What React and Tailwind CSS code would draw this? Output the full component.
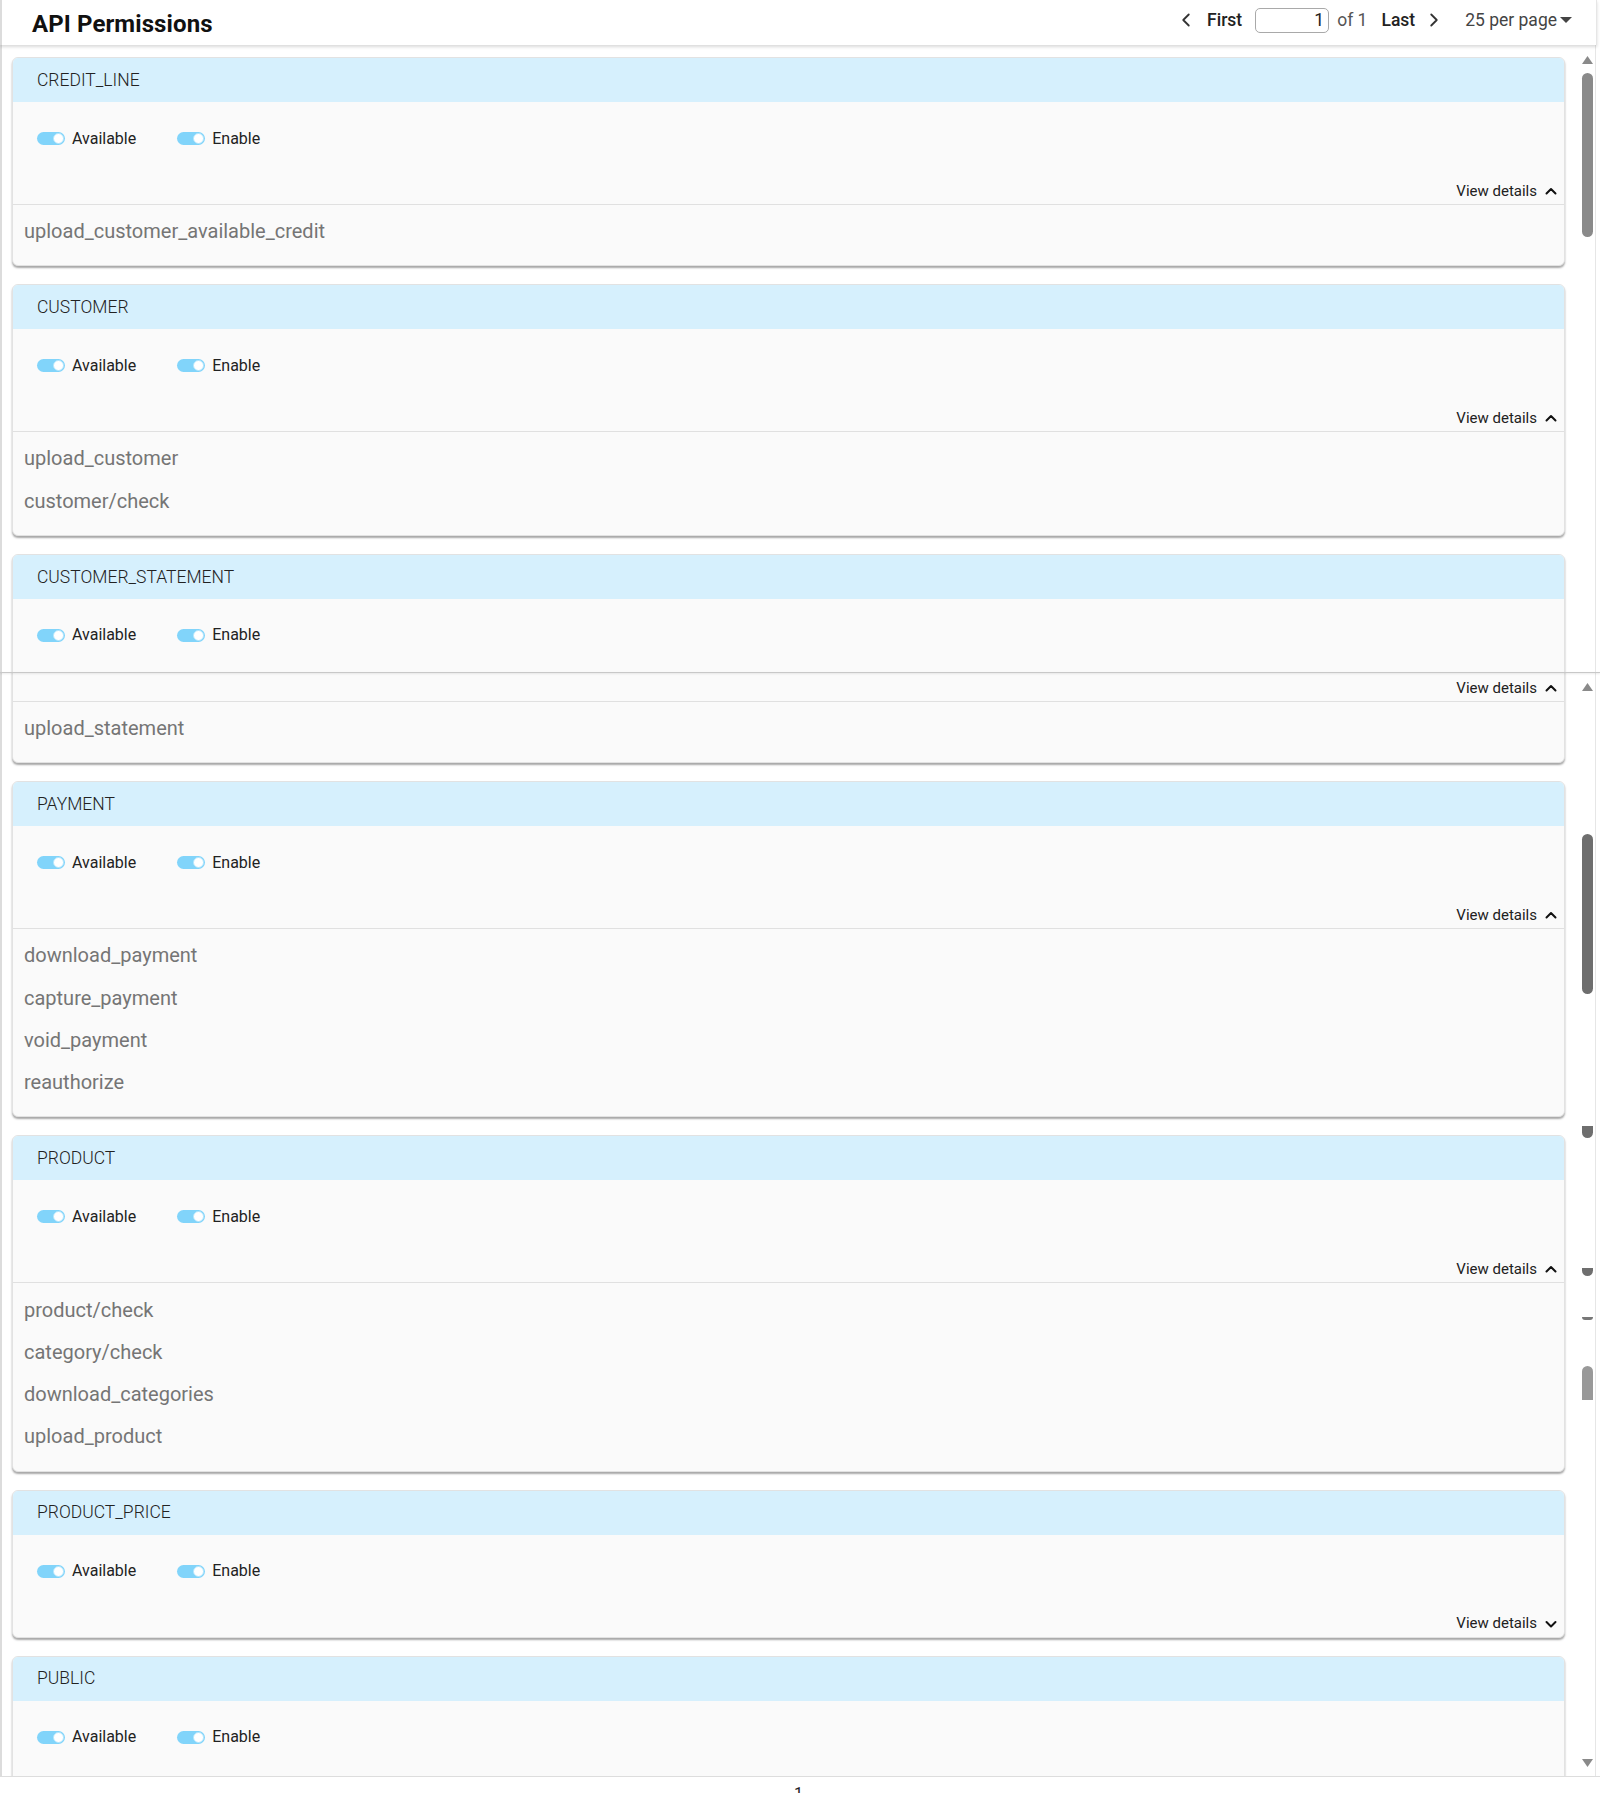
import { ChevronLeft, ChevronRight } from "lucide-react";

const groups = [
    { name: "CREDIT_LINE", open: true, items: ["upload_customer_available_credit"] },
    { name: "CUSTOMER", open: true, items: ["upload_customer", "customer/check"] },
    { name: "CUSTOMER_STATEMENT", open: true, items: ["upload_statement"] },
    { name: "PAYMENT", open: true, items: ["download_payment", "capture_payment", "void_payment", "reauthorize"] },
    { name: "PRODUCT", open: true, items: ["product/check", "category/check", "download_categories", "upload_product"] },
    { name: "PRODUCT_PRICE", open: false, items: [] },
    { name: "PUBLIC", open: false, items: [] },
];

const Toggle = ({ label }) => (
    <div className="flex items-center gap-[7px]">
        <div className="w-[28px] h-[13px] rounded-full bg-[#81d4fa] flex items-center justify-end p-[1px]">
            <div className="w-[11px] h-[11px] rounded-full bg-white border border-[#b3e5fc]" />
        </div>
        <span className="text-[16px] leading-none text-[#222]">{label}</span>
    </div>
);

const Chevron = ({ up }) => (
    <svg width="14" height="14" viewBox="0 0 14 14" fill="none" stroke="#111" strokeWidth="2" strokeLinecap="round" strokeLinejoin="round">
        {up ? <path d="M2.5 9.5 L7 5 L11.5 9.5" /> : <path d="M2.5 5 L7 9.5 L11.5 5" />}
    </svg>
);

const GroupCard = ({ group }) => (
    <div className="shrink-0 rounded-[6px] bg-[#fafafa] border border-[#e2e2e2] shadow-[0_2px_2px_rgba(0,0,0,0.35)] overflow-hidden">
        {/* Header band */}
        <div className="h-[44px] bg-[#d6f0fd] flex items-center pl-[24px] text-[17.5px] font-light text-[#222]">
            {group.name}
        </div>

        {/* Toggles */}
        <div className="flex items-center gap-[41px] pl-[24px] pt-[28px] h-[45px]">
            <Toggle label="Available" />
            <Toggle label="Enable" />
        </div>

        {/* View details */}
        <div className="flex items-center justify-end gap-[7px] pr-[6px] h-[20px] mt-[34px] mb-[3px]">
            <span className="text-[15px] text-[#212121]">View details</span>
            <Chevron up={group.open} />
        </div>

        {group.open && (
            <div className="border-t border-[#e0e0e0] pt-[5px] pb-[13px]">
                {group.items.map((item) => (
                    <div key={item} className="h-[42.3px] flex items-center pl-[11px] text-[20px] text-[#757575]">
                        {item}
                    </div>
                ))}
            </div>
        )}
    </div>
);

const Arrow = ({ down }) => (
    <svg width="11" height="10" viewBox="0 0 11 10">
        {down ? <path d="M0 1 H11 L5.5 9 Z" fill="#8a8a8a" /> : <path d="M0 9 H11 L5.5 1 Z" fill="#8a8a8a" />}
    </svg>
);

const App = () => {
    return (
        <div className="w-[1600px] h-[1793px] relative overflow-hidden bg-white flex flex-col font-['Roboto','Liberation_Sans',sans-serif]">
            {/* Header */}
            <div className="h-[45px] shrink-0 flex items-center justify-between pl-[30px] pr-[23px] bg-white border-l-2 border-[#dcdcdc] border-r border-r-[#e6e6e6] mr-[3px] shadow-[0_2px_3px_rgba(0,0,0,0.15)] relative z-10">
                <h1 className="mt-[2px] text-[24px] font-bold text-[#111] tracking-[0.1px]">API Permissions</h1>
                <div className="-mt-[5px] flex items-center text-[17.5px]">
                    <ChevronLeft className="w-[22px] h-[22px] text-[#333]" strokeWidth={2} />
                    <span className="ml-[10px] font-medium text-[#222]">First</span>
                    <div className="ml-[13px] w-[74px] h-[25px] rounded-[5px] border border-[#a9a9a9] flex items-center justify-end pr-[4px] text-[#222]">1</div>
                    <span className="ml-[8px] text-[#555]">of 1</span>
                    <span className="ml-[14px] font-medium text-[#222]">Last</span>
                    <ChevronRight className="ml-[8px] w-[22px] h-[22px] text-[#333]" strokeWidth={2} />
                    <span className="ml-[20px] text-[#444]">25 per page</span>
                    <svg width="14" height="8" viewBox="0 0 14 8" className="ml-[2px]">
                        <path d="M1 1 H13 L7 7 Z" fill="#444" />
                    </svg>
                </div>
            </div>

            {/* Body */}
            <div className="flex-1 flex min-h-0 overflow-hidden">
                <div className="w-[1568px] shrink-0 border-l-2 border-[#dcdcdc] pl-[10px] pr-[3px] pt-[12px] flex flex-col gap-[18px]">
                    {groups.map((g) => (
                        <GroupCard key={g.name} group={g} />
                    ))}
                </div>

                {/* Scrollbar lane */}
                <div className="w-[28px] shrink-0 pl-[14px] flex flex-col border-r border-[#e6e6e6]">
                    <div className="mt-[10px]"><Arrow /></div>
                    <div className="mt-[8px] shrink-0 w-[11px] h-[164px] rounded-full bg-[#8a8a8a]" />
                    <div className="mt-[445px]"><Arrow /></div>
                    <div className="mt-[142px] shrink-0 w-[11px] h-[160px] rounded-full bg-[#6e6e6e]" />
                    <div className="mt-[132px] shrink-0 w-[11px] h-[12px] rounded-b-full bg-[#6e6e6e]" />
                    <div className="mt-[130px] shrink-0 w-[11px] h-[8px] rounded-b-full bg-[#6e6e6e]" />
                    <div className="mt-[41px] shrink-0 w-[11px] h-[3px] rounded-b-full bg-[#777]" />
                    <div className="mt-[46px] shrink-0 w-[11px] h-[34px] rounded-t-full bg-[#999]" />
                    <div className="mt-[358px]"><Arrow down /></div>
                </div>
            </div>

            {/* Footer */}
            <div className="h-[17px] shrink-0 bg-white border-t border-[#dddddd] pl-[794px] pt-[9px] text-[16px] leading-none text-[#222] relative z-10">
                1
            </div>

            {/* capture seam */}
            <div className="absolute left-0 right-0 top-[672px] h-px bg-[#c8c8c8] shadow-[0_1px_2px_rgba(0,0,0,0.12)]" />
        </div>
    );
};

export default App;
